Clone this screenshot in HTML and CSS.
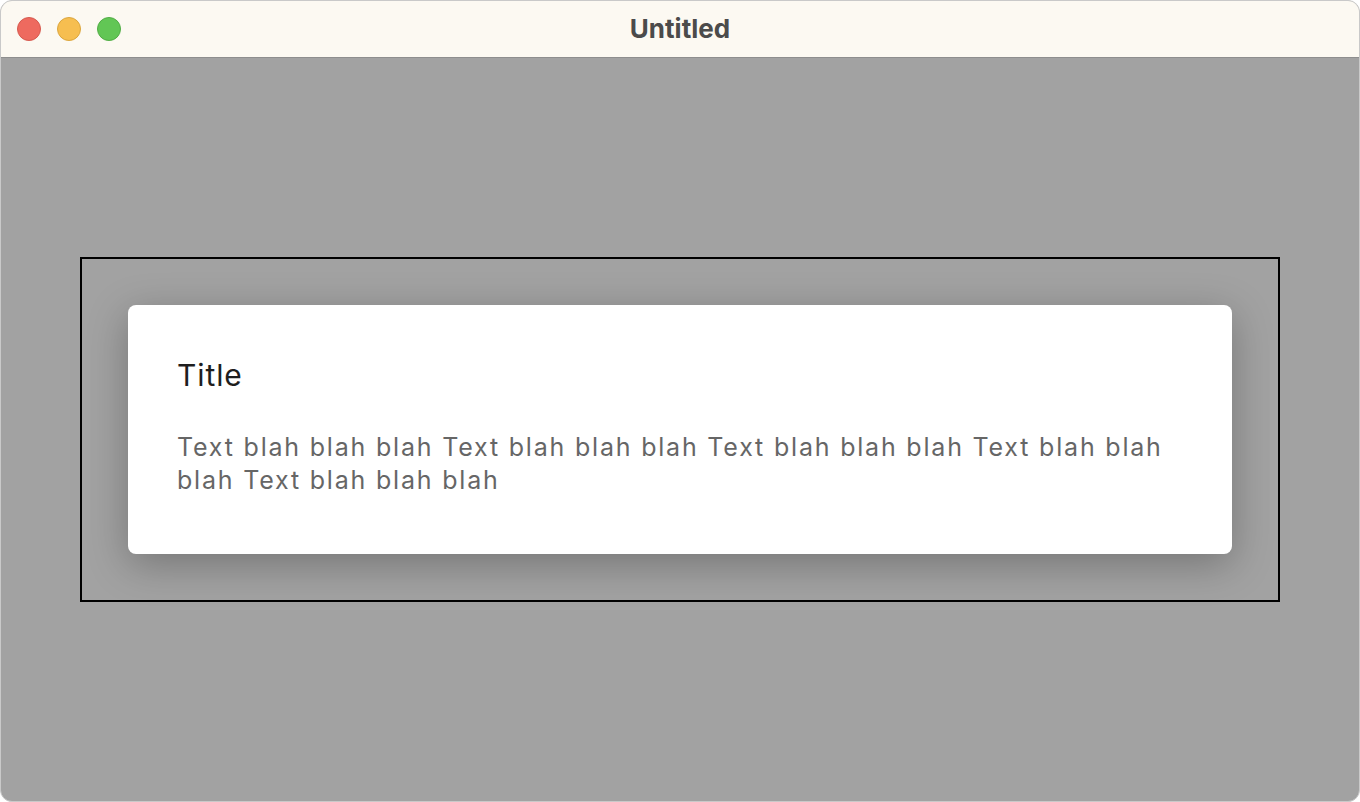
FILE: index.html
```html
<!DOCTYPE html>
<html lang="en">
  <head>
    <meta charset="UTF-8" />
    <meta name="viewport" content="width=device-width, initial-scale=1.0" />
    <title>Untitled</title>

    <link rel="stylesheet" href="styles.css">
  </head>
  <body>
    <div class="window">
      <div class="titlebar">
        <div class="lights">
          <span class="light light-close"></span>
          <span class="light light-min"></span>
          <span class="light light-max"></span>
        </div>
        <div class="window-title">Untitled</div>
      </div>
      <div class="content">
        <div class="frame">
          <div class="card">
            <h1 class="card-title">Title</h1>
            <p class="card-text">Text blah blah blah Text blah blah blah Text blah blah blah Text blah blah blah Text blah blah blah</p>
          </div>
        </div>
      </div>
    </div>
  </body>
</html>
```

FILE: styles.css
```css
html,
body {
  margin: 0;
  height: 100%;
  background: #fff;
}

.window {
  box-sizing: border-box;
  height: 802px;
  width: 1360px;
  display: flex;
  flex-direction: column;
  border: 1px solid #c9c9c9;
  border-radius: 12px;
  overflow: hidden;
  background: #a2a2a2;
}

.titlebar {
  position: relative;
  flex: 0 0 56px;
  background: #fcf9f2;
  border-bottom: 1px solid #8e8e8e;
  display: flex;
  align-items: center;
  justify-content: center;
}

.lights {
  position: absolute;
  left: 16px;
  top: 16px;
  display: flex;
  gap: 16px;
}

.light {
  box-sizing: border-box;
  width: 24px;
  height: 24px;
  border-radius: 50%;
}

.light-close {
  background: #ee6a5f;
  border: 1px solid #d65a4f;
}

.light-min {
  background: #f6be50;
  border: 1px solid #dba63e;
}

.light-max {
  background: #62c655;
  border: 1px solid #51ad45;
}

.window-title {
  font-family: Inter, "Liberation Sans", sans-serif;
  font-weight: 700;
  font-size: 26px;
  color: #4b4b4b;
  margin-top: -2px;
}

.content {
  flex: 1;
  display: flex;
  align-items: center;
  justify-content: center;
}

.frame {
  width: 1200px;
  box-sizing: border-box;
  border: 2px solid #000;
  padding: 46px;
}

.card {
  background: #fff;
  border-radius: 8px;
  padding: 52px 48px 57px 49px;
  box-shadow: 0 10px 40px rgba(0, 0, 0, 0.28);
  font-family: Inter, "Liberation Sans", sans-serif;
}

.card-title {
  margin: 0 0 38px;
  font-size: 30px;
  line-height: 36px;
  font-weight: 400;
  letter-spacing: 0.9px;
  color: #1e1e1e;
}

.card-text {
  margin: 0;
  font-size: 25px;
  line-height: 33px;
  letter-spacing: 1.8px;
  color: #666;
}
```
